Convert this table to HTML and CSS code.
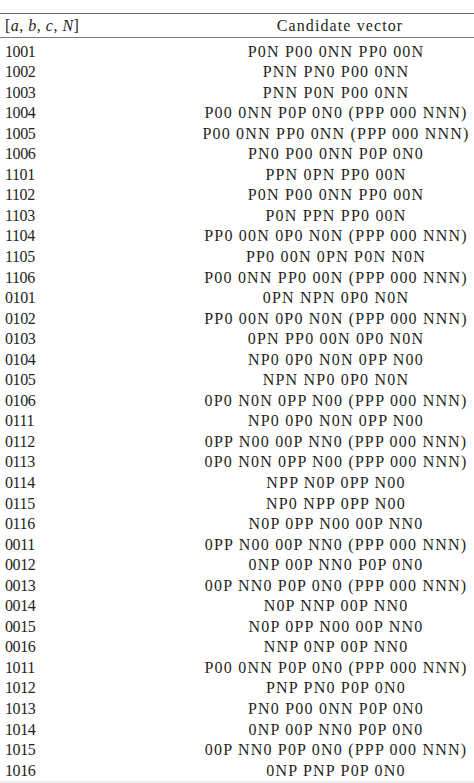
FILE: index.html
```html
<!DOCTYPE html>
<html>
<head>
<meta charset="utf-8">
<link rel="stylesheet" href="styles.css">
</head>
<body>
<div class="tbl">
  <div class="row head">
    <div class="key">[<i>a</i>, <i>b</i>, <i>c</i>, <i>N</i>]</div>
    <div class="vec">Candidate vector</div>
  </div>
  <div class="body">
    <div class="row"><div class="key">1001</div><div class="vec">P0N P00 0NN PP0 00N</div></div>
    <div class="row"><div class="key">1002</div><div class="vec">PNN PN0 P00 0NN</div></div>
    <div class="row"><div class="key">1003</div><div class="vec">PNN P0N P00 0NN</div></div>
    <div class="row"><div class="key">1004</div><div class="vec">P00 0NN P0P 0N0 (PPP 000 NNN)</div></div>
    <div class="row"><div class="key">1005</div><div class="vec">P00 0NN PP0 0NN (PPP 000 NNN)</div></div>
    <div class="row"><div class="key">1006</div><div class="vec">PN0 P00 0NN P0P 0N0</div></div>
    <div class="row"><div class="key">1101</div><div class="vec">PPN 0PN PP0 00N</div></div>
    <div class="row"><div class="key">1102</div><div class="vec">P0N P00 0NN PP0 00N</div></div>
    <div class="row"><div class="key">1103</div><div class="vec">P0N PPN PP0 00N</div></div>
    <div class="row"><div class="key">1104</div><div class="vec">PP0 00N 0P0 N0N (PPP 000 NNN)</div></div>
    <div class="row"><div class="key">1105</div><div class="vec">PP0 00N 0PN P0N N0N</div></div>
    <div class="row"><div class="key">1106</div><div class="vec">P00 0NN PP0 00N (PPP 000 NNN)</div></div>
    <div class="row"><div class="key">0101</div><div class="vec">0PN NPN 0P0 N0N</div></div>
    <div class="row"><div class="key">0102</div><div class="vec">PP0 00N 0P0 N0N (PPP 000 NNN)</div></div>
    <div class="row"><div class="key">0103</div><div class="vec">0PN PP0 00N 0P0 N0N</div></div>
    <div class="row"><div class="key">0104</div><div class="vec">NP0 0P0 N0N 0PP N00</div></div>
    <div class="row"><div class="key">0105</div><div class="vec">NPN NP0 0P0 N0N</div></div>
    <div class="row"><div class="key">0106</div><div class="vec">0P0 N0N 0PP N00 (PPP 000 NNN)</div></div>
    <div class="row"><div class="key">0111</div><div class="vec">NP0 0P0 N0N 0PP N00</div></div>
    <div class="row"><div class="key">0112</div><div class="vec">0PP N00 00P NN0 (PPP 000 NNN)</div></div>
    <div class="row"><div class="key">0113</div><div class="vec">0P0 N0N 0PP N00 (PPP 000 NNN)</div></div>
    <div class="row"><div class="key">0114</div><div class="vec">NPP N0P 0PP N00</div></div>
    <div class="row"><div class="key">0115</div><div class="vec">NP0 NPP 0PP N00</div></div>
    <div class="row"><div class="key">0116</div><div class="vec">N0P 0PP N00 00P NN0</div></div>
    <div class="row"><div class="key">0011</div><div class="vec">0PP N00 00P NN0 (PPP 000 NNN)</div></div>
    <div class="row"><div class="key">0012</div><div class="vec">0NP 00P NN0 P0P 0N0</div></div>
    <div class="row"><div class="key">0013</div><div class="vec">00P NN0 P0P 0N0 (PPP 000 NNN)</div></div>
    <div class="row"><div class="key">0014</div><div class="vec">N0P NNP 00P NN0</div></div>
    <div class="row"><div class="key">0015</div><div class="vec">N0P 0PP N00 00P NN0</div></div>
    <div class="row"><div class="key">0016</div><div class="vec">NNP 0NP 00P NN0</div></div>
    <div class="row"><div class="key">1011</div><div class="vec">P00 0NN P0P 0N0 (PPP 000 NNN)</div></div>
    <div class="row"><div class="key">1012</div><div class="vec">PNP PN0 P0P 0N0</div></div>
    <div class="row"><div class="key">1013</div><div class="vec">PN0 P00 0NN P0P 0N0</div></div>
    <div class="row"><div class="key">1014</div><div class="vec">0NP 00P NN0 P0P 0N0</div></div>
    <div class="row"><div class="key">1015</div><div class="vec">00P NN0 P0P 0N0 (PPP 000 NNN)</div></div>
    <div class="row"><div class="key">1016</div><div class="vec">0NP PNP P0P 0N0</div></div>
  </div>
</div>
</body>
</html>
```
FILE: styles.css
```css
html, body {
  margin: 0;
  padding: 0;
  background: #ffffff;
}
body {
  font-family: "Liberation Serif", "Times New Roman", serif;
  font-size: 16px;
  color: #231f20;
}
.tbl {
  margin-top: 13px;
  width: 474px;
  border-top: 1.5px solid #6b6b6b;
}
.row {
  display: grid;
  grid-template-columns: 198px 1fr;
  height: 20.55px;
  line-height: 20.55px;
  white-space: nowrap;
}
.head {
  height: 23px;
  line-height: 23px;
  border-bottom: 1px solid #7a7a7a;
}
.body {
  padding-top: 3.5px;
  border-bottom: 2px solid #eeeeee;
}
.key {
  padding-left: 5px;
  text-align: left;
  letter-spacing: -0.4px;
}
.head .key {
  letter-spacing: 0.5px;
}
.vec {
  text-align: center;
  letter-spacing: 1.2px;
}
.head .vec {
  letter-spacing: 1.1px;
  padding-left: 8px;
}
```
